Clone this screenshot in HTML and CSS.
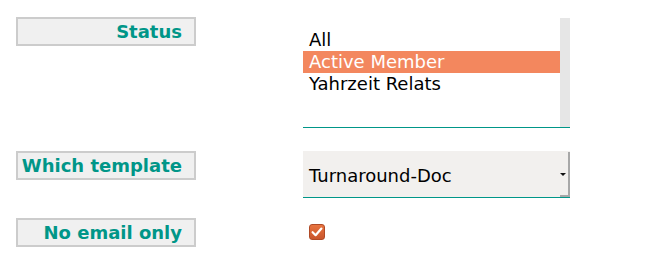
FILE: index.html
```html
<!DOCTYPE html>
<html>
<head>
<meta charset="utf-8">
<link rel="stylesheet" href="styles.css">
</head>
<body>
<div class="form">
  <div class="row row-status">
    <div class="label">Status</div>
    <div class="listbox">
      <div class="options">
        <div class="option">All</div>
        <div class="option selected">Active Member</div>
        <div class="option">Yahrzeit Relats</div>
      </div>
      <div class="scrollbar"></div>
    </div>
  </div>
  <div class="row row-template">
    <div class="label">Which template</div>
    <div class="select">
      <span class="select-text">Turnaround-Doc</span>
      <span class="select-btn"><span class="arrow"></span></span>
    </div>
  </div>
  <div class="row row-email">
    <div class="label">No email only</div>
    <span class="checkbox">
      <svg width="16" height="16" viewBox="0 0 16 16"><polyline points="3.6,8.2 6.6,11.2 12.4,4.6" fill="none" stroke="#fff" stroke-width="2.2" stroke-linecap="round" stroke-linejoin="round"/></svg>
    </span>
  </div>
</div>
</body>
</html>
```
FILE: styles.css
```css
html, body {
  margin: 0;
  padding: 0;
  background: #fff;
}
body {
  font-family: "DejaVu Sans", "Liberation Sans", sans-serif;
}
.form {
  padding: 17px 0 0 16px;
}
.row {
  display: flex;
  align-items: flex-start;
}
.row-template {
  margin-top: 23px;
}
.row-email {
  margin-top: 20px;
}
.label {
  box-sizing: border-box;
  width: 180px;
  height: 29px;
  border: 2px solid #cccccc;
  background: #f0f0f0;
  color: #009688;
  font-weight: bold;
  font-size: 18px;
  line-height: 25px;
  text-align: right;
  padding-right: 12px;
  white-space: nowrap;
  overflow: visible;
  margin-right: 107px;
}
.listbox {
  box-sizing: border-box;
  width: 267px;
  height: 110px;
  margin-top: 1px;
  border-bottom: 1px solid #009688;
  display: flex;
}
.options {
  flex: 1;
  padding-top: 11px;
}
.option {
  font-size: 18px;
  line-height: 22px;
  height: 22px;
  padding-left: 6px;
  color: #000;
  white-space: nowrap;
}
.option.selected {
  background: #f3875e;
  color: #fff;
}
.scrollbar {
  width: 10px;
  background: #e6e6e6;
}
.select {
  box-sizing: border-box;
  width: 267px;
  height: 47px;
  background: #f2f0ee;
  border-bottom: 1px solid #009688;
  display: flex;
  align-items: stretch;
}
.select-text {
  flex: 1;
  font-size: 18px;
  line-height: 21px;
  padding-left: 6px;
  padding-top: 14px;
  color: #000;
}
.select-btn {
  box-sizing: border-box;
  width: 10px;
  margin-top: 1px;
  border-right: 2px solid #a8a8a8;
  border-bottom: 2px solid #a8a8a8;
  display: flex;
  justify-content: center;
  padding-top: 21px;
}
.arrow {
  width: 0;
  height: 0;
  border-left: 3px solid transparent;
  border-right: 3px solid transparent;
  border-top: 3px solid #111;
  margin-left: -2px;
}
.checkbox {
  box-sizing: border-box;
  width: 16px;
  height: 16px;
  margin-top: 6px;
  margin-left: 6px;
  border-radius: 3px;
  background: linear-gradient(#e8743f, #c9552c);
  border: 1px solid #b04a26;
  display: flex;
  align-items: center;
  justify-content: center;
}
.checkbox svg {
  display: block;
  margin: -1px;
}
```
